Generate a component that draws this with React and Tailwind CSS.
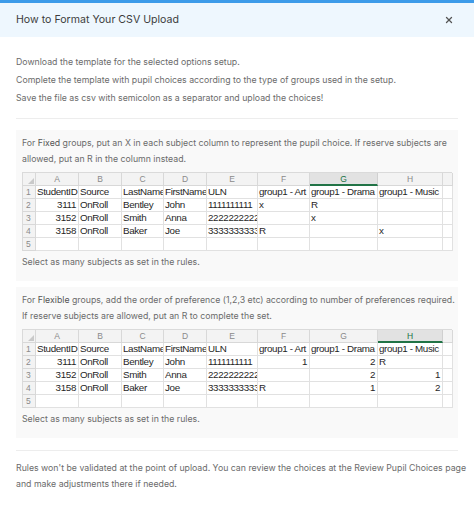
import React from "react";
import { X } from "lucide-react";

const COLS = ["", "A", "B", "C", "D", "E", "F", "G", "H", ""];
const WIDTHS = [13, 43, 43, 42, 43, 51, 52, 68, 65, 10];

function Sheet({ rows, hl }) {
  return (
    <div className="flex flex-col w-[430px] font-['Liberation_Sans',sans-serif] text-[9.8px] tracking-[-0.35px] text-[#1f1f1f] bg-white border-l border-t border-[#dadada]">
      <div className="flex h-[13px]">
        {COLS.map((c, i) => (
          <div
            key={i}
            style={{ width: WIDTHS[i] }}
            className={
              "relative shrink-0 flex items-center justify-center border-r border-b text-[8.5px] tracking-normal " +
              (i === hl
                ? "bg-[#e2e2e2] text-[#217346] border-b-2 border-b-[#217346] border-r-[#d0d0d0]"
                : "bg-[#f3f3f3] text-[#8a8a8a] border-[#d8d8d8]")
            }
          >
            {i === 0 ? (
              <svg width="6" height="6" viewBox="0 0 6 6" className="absolute right-[1px] bottom-[1px]">
                <path d="M6 0 L6 6 L0 6 Z" fill="#c9c9c9" />
              </svg>
            ) : (
              c
            )}
          </div>
        ))}
      </div>
      {rows.map((r, ri) => (
        <div key={ri} className="flex h-[13px]">
          <div
            style={{ width: WIDTHS[0] }}
            className="shrink-0 bg-[#f3f3f3] border-r border-b border-[#d8d8d8] text-[8.5px] tracking-normal text-[#8a8a8a] flex items-center pl-[3px]"
          >
            {ri + 1}
          </div>
          {r.map((cell, ci) => {
            const right = typeof cell === "number";
            return (
              <div
                key={ci}
                style={{ width: WIDTHS[ci + 1] }}
                className={
                  "shrink-0 border-r border-b border-[#e1e1e1] overflow-hidden whitespace-nowrap flex items-center leading-none " +
                  (right ? "justify-end pr-[2px]" : "pl-[1px]")
                }
              >
                {cell}
              </div>
            );
          })}
        </div>
      ))}
    </div>
  );
}

const head = ["StudentID", "Source", "LastName", "FirstName", "ULN", "group1 - Art", "group1 - Drama", "group1 - Music", ""];
const empty = ["", "", "", "", "", "", "", "", ""];

const fixedRows = [
  head,
  [3111, "OnRoll", "Bentley", "John", "1111111111", "x", "R", "", ""],
  [3152, "OnRoll", "Smith", "Anna", "2222222222", "", "x", "", ""],
  [3158, "OnRoll", "Baker", "Joe", "3333333333", "R", "", "x", ""],
  empty,
];

const flexRows = [
  head,
  [3111, "OnRoll", "Bentley", "John", "1111111111", 1, 2, "R", ""],
  [3152, "OnRoll", "Smith", "Anna", "2222222222", "", 2, 1, ""],
  [3158, "OnRoll", "Baker", "Joe", "3333333333", "R", 1, 2, ""],
  empty,
];

export default function App() {
  return (
    <div className="w-[474px] h-[506px] bg-white overflow-hidden font-['Inter',sans-serif] text-[#6b6b6b]">
      <div className="h-[3px] bg-[#3d9be9]" />
      <div className="h-[34px] bg-[#eef7fe] flex items-center justify-between pl-4 pr-[20px]">
        <span className="text-[10.6px] text-[#3d3d3d]">How to Format Your CSV Upload</span>
        <X size={10} strokeWidth={3} className="text-[#555]" />
      </div>
      <div className="px-4 pt-[16px] text-[8.75px] leading-[18px] whitespace-nowrap">
        <p>Download the template for the selected options setup.</p>
        <p>Complete the template with pupil choices according to the type of groups used in the setup.</p>
        <p>Save the file as csv with semicolon as a separator and upload the choices!</p>
        <div className="mt-[11px] border-t border-[#ededed]" />

        <div className="mt-[11px] bg-[#f9f9f9] px-[6px] pt-[5px] pb-[11px]">
          <div className="leading-[16px]">
            <p>
              For <span className="text-[#555]">Fixed</span> groups, put an X in each subject column to represent the pupil choice. If reserve subjects are
            </p>
            <p>allowed, put an R in the column instead.</p>
          </div>
          <div className="mt-[5px]">
            <Sheet rows={fixedRows} hl={7} />
          </div>
          <p className="mt-[3px] leading-[16px]">Select as many subjects as set in the rules.</p>
        </div>

        <div className="mt-[6px] bg-[#f9f9f9] px-[6px] pt-[5px] pb-[11px]">
          <div className="leading-[16px]">
            <p>
              For <span className="text-[#555]">Flexible</span> groups, add the order of preference (1,2,3 etc) according to number of preferences required.
            </p>
            <p>If reserve subjects are allowed, put an R to complete the set.</p>
          </div>
          <div className="mt-[5px]">
            <Sheet rows={flexRows} hl={8} />
          </div>
          <p className="mt-[3px] leading-[16px]">Select as many subjects as set in the rules.</p>
        </div>

        <div className="mt-[12px] border-t border-[#ededed]" />
        <div className="mt-[9px] leading-[16px]">
          <p>Rules won't be validated at the point of upload. You can review the choices at the Review Pupil Choices page</p>
          <p>and make adjustments there if needed.</p>
        </div>
      </div>
    </div>
  );
}
